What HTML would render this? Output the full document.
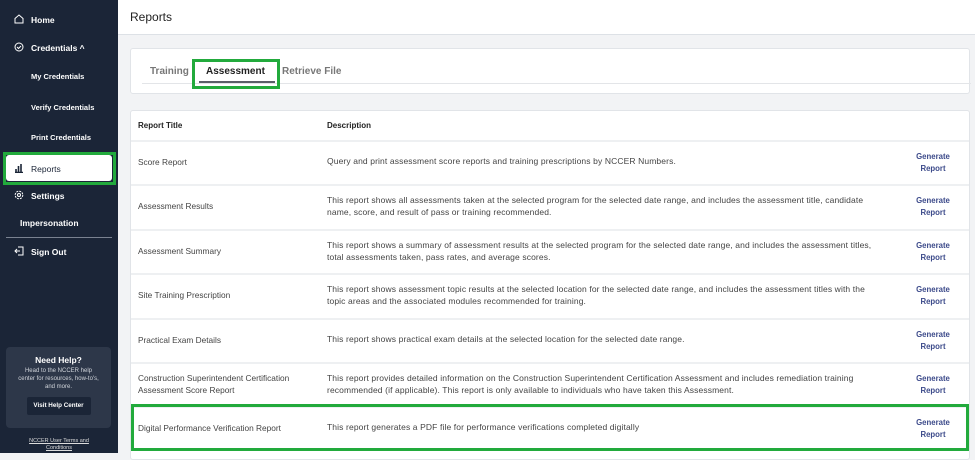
<!DOCTYPE html>
<html><head><meta charset="utf-8"><style>
*{margin:0;padding:0;box-sizing:border-box}
body{width:975px;height:453px;overflow:hidden;font-family:"Liberation Sans",sans-serif;background:#f2f3f5;position:relative;color:#333}
.sb{position:absolute;left:0;top:0;width:118px;height:453px;background:#1b2537;color:#fff}
.it{position:absolute;font-size:8.5px;font-weight:bold;white-space:nowrap}
.sub{font-size:7.5px}
.ic{position:absolute;width:10px;height:10px}
.hdr{position:absolute;left:118px;top:0;width:857px;height:35px;background:#fff;border-bottom:1px solid #dde1e6}
.card{position:absolute;background:#fff;border:1px solid #e1e4e8;border-radius:3px}
.row{position:absolute;left:0;width:838px;border-top:2px solid #eef0f2;font-size:8.3px;color:#444}
.t{position:absolute;left:7px;white-space:nowrap}
.d{position:absolute;left:196px;white-space:nowrap;line-height:11.5px;font-size:8.5px;letter-spacing:0.12px}
.g{position:absolute;left:772px;width:60px;text-align:center;color:#3c4a8a;font-weight:bold;font-size:7.8px;line-height:11.5px}
.gb{position:absolute;border:3px solid #22aa3c}
</style></head><body>
<div class="sb">
 <svg class="ic" style="left:14px;top:14px" viewBox="0 0 10 10"><path d="M1 4.5L5 1l4 3.5V9H1z" fill="none" stroke="#fff" stroke-width="1"/></svg>
 <div class="it" style="left:31px;top:15px">Home</div>
 <svg class="ic" style="left:14px;top:42px" viewBox="0 0 10 10"><circle cx="5" cy="5" r="4" fill="none" stroke="#fff"/><path d="M3 5l1.5 1.5L7 4" fill="none" stroke="#fff"/></svg>
 <div class="it" style="left:31px;top:43px">Credentials ^</div>
 <div class="it sub" style="left:31px;top:72px">My Credentials</div>
 <div class="it sub" style="left:31px;top:103px">Verify Credentials</div>
 <div class="it sub" style="left:31px;top:133px">Print Credentials</div>
 <div style="position:absolute;left:6px;top:155px;width:106px;height:26px;background:#fff;border-radius:3px"></div>
 <svg class="ic" style="left:14px;top:163px" viewBox="0 0 10 10"><path d="M1 9.5h8M2 9V6M4.5 9V3M7 9V1" stroke="#1b2537" stroke-width="1.6"/></svg>
 <div class="it" style="left:31px;top:164px;color:#1b2537;font-weight:normal">Reports</div>
 <svg class="ic" style="left:14px;top:190px" viewBox="0 0 10 10"><circle cx="5" cy="5" r="3.8" fill="none" stroke="#fff" stroke-dasharray="2 1"/><circle cx="5" cy="5" r="1.5" fill="none" stroke="#fff"/></svg>
 <div class="it" style="left:31px;top:191px">Settings</div>
 <div class="it" style="left:20px;top:218px">Impersonation</div>
 <div style="position:absolute;left:6px;top:237px;width:106px;height:1px;background:#7a8290"></div>
 <svg class="ic" style="left:14px;top:246px" viewBox="0 0 10 10"><path d="M4 1h5v8H4M6 5H1M3 3L1 5l2 2" fill="none" stroke="#fff"/></svg>
 <div class="it" style="left:31px;top:247px">Sign Out</div>
 <div style="position:absolute;left:6px;top:347px;width:105px;height:81px;background:#2d3749;border-radius:4px;text-align:center">
  <div style="font-size:8.5px;font-weight:bold;margin-top:8px">Need Help?</div>
  <div style="font-size:6px;color:#d0d4da;line-height:8px;margin-top:2px">Head to the NCCER help<br>center for resources, how-to's,<br>and more.</div>
  <div style="margin:6px auto 0;width:64px;height:18px;background:#1b2537;border-radius:2px;font-size:6.3px;font-weight:bold;line-height:18px">Visit Help Center</div>
 </div>
 <div style="position:absolute;left:0;width:118px;top:438px;text-align:center;font-size:5.5px;line-height:7px;text-decoration:underline;color:#ddd">NCCER User Terms and<br>Conditions</div>
</div>
<div class="hdr"><div style="position:absolute;left:12px;top:10px;font-size:12px;color:#222">Reports</div></div>
<div class="card" style="left:130px;top:48px;width:840px;height:46px">
 <div style="position:absolute;left:11px;top:34px;width:829px;height:1px;background:#e3e5e8"></div>
 <div style="position:absolute;left:19px;top:17px;font-size:10px;font-weight:bold;color:#777">Training</div>
 <div style="position:absolute;left:75px;top:17px;font-size:10px;font-weight:bold;color:#222">Assessment</div>
 <div style="position:absolute;left:68px;top:32px;width:76px;height:2px;background:#5a5f68"></div>
 <div style="position:absolute;left:151px;top:17px;font-size:10px;font-weight:bold;color:#777">Retrieve File</div>
</div>
<div class="gb" style="left:192px;top:59px;width:88px;height:30px"></div>
<div class="card" style="left:130px;top:110px;width:840px;height:350px">
 <div style="position:absolute;left:7px;top:10px;font-size:8px;font-weight:bold;color:#222">Report Title</div>
 <div style="position:absolute;left:196px;top:10px;font-size:8px;font-weight:bold;color:#222">Description</div>
 <div class="row" style="top:29px;height:44px"><div class="t" style="top:15px">Score Report</div><div class="d" style="top:14px">Query and print assessment score reports and training prescriptions by NCCER Numbers.</div><div class="g" style="top:9px">Generate<br>Report</div></div>
 <div class="row" style="top:73px;height:45px"><div class="t" style="top:15px">Assessment Results</div><div class="d" style="top:9px">This report shows all assessments taken at the selected program for the selected date range, and includes the assessment title, candidate<br>name, score, and result of pass or training recommended.</div><div class="g" style="top:9px">Generate<br>Report</div></div>
 <div class="row" style="top:118px;height:44px"><div class="t" style="top:15px">Assessment Summary</div><div class="d" style="top:9px">This report shows a summary of assessment results at the selected program for the selected date range, and includes the assessment titles,<br>total assessments taken, pass rates, and average scores.</div><div class="g" style="top:9px">Generate<br>Report</div></div>
 <div class="row" style="top:162px;height:45px"><div class="t" style="top:15px">Site Training Prescription</div><div class="d" style="top:9px">This report shows assessment topic results at the selected location for the selected date range, and includes the assessment titles with the<br>topic areas and the associated modules recommended for training.</div><div class="g" style="top:9px">Generate<br>Report</div></div>
 <div class="row" style="top:207px;height:44px"><div class="t" style="top:15px">Practical Exam Details</div><div class="d" style="top:14px">This report shows practical exam details at the selected location for the selected date range.</div><div class="g" style="top:9px">Generate<br>Report</div></div>
 <div class="row" style="top:251px;height:44px"><div class="t" style="top:9px;line-height:11.5px">Construction Superintendent Certification<br>Assessment Score Report</div><div class="d" style="top:9px">This report provides detailed information on the Construction Superintendent Certification Assessment and includes remediation training<br>recommended (if applicable). This report is only available to individuals who have taken this Assessment.</div><div class="g" style="top:9px">Generate<br>Report</div></div>
 <div class="row" style="top:295px;height:45px"><div class="t" style="top:15px">Digital Performance Verification Report</div><div class="d" style="top:14px">This report generates a PDF file for performance verifications completed digitally</div><div class="g" style="top:9px">Generate<br>Report</div></div>
</div>
<div class="gb" style="left:3px;top:152px;width:113px;height:33px"></div>
<div class="gb" style="left:131px;top:404px;width:838px;height:47px"></div>
</body></html>
